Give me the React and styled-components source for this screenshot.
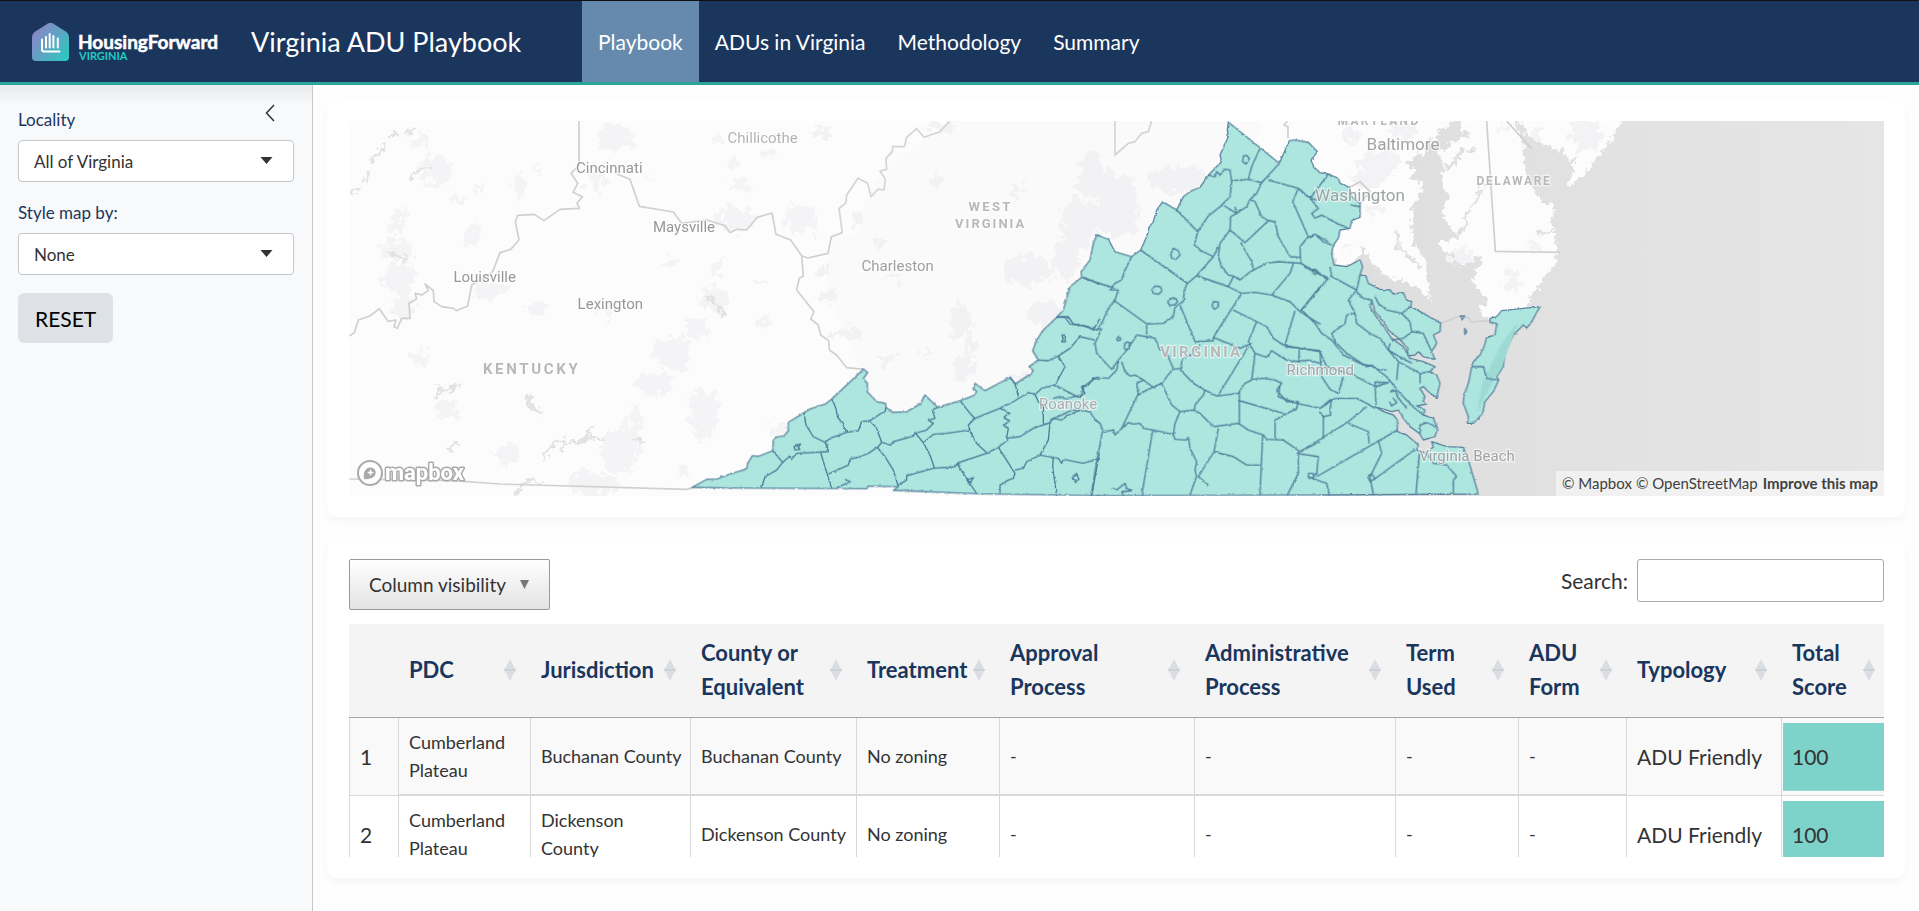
import React from 'react';
import styled, { createGlobalStyle } from 'styled-components';

const GlobalStyle = createGlobalStyle`
  * {
    box-sizing: border-box;
  }
  body {
    margin: 0;
    background: #fefefe;
    color: #333;
    font-family: Lato, "Liberation Sans", sans-serif;
    font-size: 21px;
    line-height: 34px;
  }
  button, input, select {
    font-family: inherit;
    color: inherit;
  }
`;

const Page = styled.div`
  display: flex;
  flex-direction: column;
  min-height: 100vh;
`;
const Header = styled.header`
  position: relative;
  display: flex;
  align-items: stretch;
  height: 85px;
  padding-left: 32px;
  background: #1b365d;
  border-top: 1px solid #111;
  border-bottom: 3px solid #2ba59b;
`;
const Brand = styled.a`
  display: flex;
  align-items: center;
  gap: 31px;
  width: 550px;
  color: #fff;
  font-size: 27px;
  text-decoration: none;
`;
const Nav = styled.nav`
  display: flex;
`;
const NavLink = styled.a`
  display: flex;
  align-items: center;
  padding: 0 16px;
  color: #fff;
  background: ${props => (props.$active ? '#668aae' : 'transparent')};
  font-size: 21px;
  text-decoration: none;
`;
const Body = styled.div`
  display: flex;
  flex: 1;
`;
const Sidebar = styled.aside`
  display: flex;
  flex-direction: column;
  flex: 0 0 313px;
  padding: 21px 18px;
  background: linear-gradient(#e9eaec, #f8f9fb 20px);
  border-right: 1px solid #c6c8ca;
`;
const Collapse = styled.button`
  position: absolute;
  left: 258px;
  top: 100px;
  display: flex;
  justify-content: center;
  width: 24px;
  padding: 4px 0;
  border: 0;
  background: none;
`;
const Field = styled.div`
  position: relative;
  display: flex;
  flex-direction: column;
  gap: 6px;
  margin-bottom: 17px;
  font-size: 17px;
`;
const Label = styled.label`
  color: #1b365d;
  line-height: 28px;
`;
const Select = styled.select`
  appearance: none;
  height: 42px;
  padding: 0 15px;
  background: #fff;
  border: 1px solid #c4c7ca;
  border-radius: 4px;
  font-size: 17px;
`;
const Caret = styled.svg`
  position: absolute;
  right: 21px;
  bottom: 18px;
  pointer-events: none;
`;
const Reset = styled.button`
  align-self: flex-start;
  height: 50px;
  margin-top: 1px;
  padding: 0 17px;
  border: 0;
  border-radius: 6px;
  background: #dee2e6;
  color: #000;
  font-size: 21px;
`;
const Main = styled.main`
  display: flex;
  flex: 1;
  flex-direction: column;
  gap: 20px;
  min-width: 0;
  padding: 14px;
`;
const Card = styled.section`
  padding: 22px 21px 21px 22px;
  background: #fff;
  border-radius: 10px;
  box-shadow: 0 4px 8px rgba(0, 0, 0, 0.04);
`;
const MapFrame = styled.div`
  position: relative;
  height: 375px;
  overflow: hidden;
`;
const MapSvg = styled.svg`
  display: block;
  width: 100%;
  height: 100%;
  font-family: Roboto, sans-serif;
`;
const MapLogo = styled.svg`
  position: absolute;
  left: 7px;
  bottom: 8px;
`;
const Attribution = styled.div`
  position: absolute;
  right: 0;
  bottom: 0;
  padding: 0 6px;
  background: rgba(255, 255, 255, 0.5);
  font-size: 15px;
  line-height: 25px;
`;
const AttributionLink = styled.a`
  margin-right: ${props => (props.$gap || 0)}px;
  color: #404040;
  font-weight: ${props => (props.$bold ? 700 : 400)};
  text-decoration: none;
`;
const Toolbar = styled.div`
  display: flex;
  justify-content: space-between;
  align-items: flex-start;
  height: 65px;
`;
const Visibility = styled.button`
  display: flex;
  align-items: center;
  gap: 14px;
  height: 51px;
  padding: 0 20px 0 19px;
  border: 1px solid #999;
  border-radius: 2px;
  background: linear-gradient(#fff, #e3e3e3);
  font-size: 19px;
`;
const Search = styled.label`
  display: flex;
  align-items: center;
  gap: 9px;
`;
const SearchInput = styled.input`
  width: 247px;
  height: 43px;
  padding: 5px;
  border: 1px solid #aaa;
  border-radius: 3px;
  font-size: 20px;
`;
const TableClip = styled.div`
  height: 233px;
  overflow: hidden;
`;
const Table = styled.table`
  width: calc(100% + 5px);
  table-layout: fixed;
  border-collapse: separate;
  border-spacing: 0;
`;
const Th = styled.th`
  height: 94px;
  padding: 0 14px 2px 11px;
  background: #f4f4f4;
  border-bottom: 1px solid #a5a5a7;
  color: #1b365d;
  font-size: 22px;
  text-align: left;
`;
const HeadCell = styled.div`
  display: flex;
  align-items: center;
  justify-content: space-between;

  svg {
    flex: none;
  }
`;
const Td = styled.td`
  padding: 10px 6px 10px 10px;
  border-left: 1px solid #d9d9d9;
  border-top: ${props => (props.$first ? 0 : 1)}px solid #d9d9d9;
  border-bottom: ${props => (props.$large ? 0 : 1)}px solid #d9d9d9;
  background: ${props => (props.$first ? '#f9f9f9' : '#fff')};
  font-size: ${props => (props.$large ? 21 : 18)}px;
  line-height: 28px;
`;
const ScoreTd = styled(Td)`
  background-image: linear-gradient(#7dd2ca, #7dd2ca);
  background-size: 98% 88%;
  background-position: center;
  background-repeat: no-repeat;
`;

/* Map geometry. Three units make one screen pixel. */
const WEST_EDGE = '1260,1187 890,1181 640,1171 655,1160 565,1158 560,1166 150,1164 36,1162 80,1138 112,1137 150,1122 200,1107 203,1090 217,1067 235,1069 278,1052 280,1020 292,1010 312,1008 325,992 325,967 372,938 390,927 436,912 455,897 550,808 563,817 550,836 562,850 562,875 590,905 617,910 618,922 638,937 680,935 720,912 735,885 773,922 840,902 880,887 890,875 880,865 885,850 915,872 990,832 1005,852 1052,822 1060,812 1047,800 1075,780 1058,752 1070,720 1090,690 1130,652 1150,630 1170,560 1205,532 1203,515 1230,480 1240,430 1250,405 1260,408';
const NORTH_EDGE = '290,405 325,418 345,455 395,470 422,450 440,410 448,380 460,365 470,330 488,305 530,330 550,290 575,272 600,262 628,222 665,185 660,165 685,110 682,90 685,66 838,190 868,122 885,120 925,127 952,155 933,180 940,200 960,218';
const EAST_EDGE = '180,218 205,222 235,235 240,250 268,262 275,290 300,310 300,352 275,362 270,385 240,390 235,415 220,435 215,460 222,495 260,500 300,480 308,500 300,525 318,528 325,550 360,568 390,570 400,582 430,578 440,600 455,605 452,620 490,640 542,670 540,695 520,705 530,730 515,755 525,778 490,770 475,755 465,765 445,768 440,740 415,715 385,690 370,665 345,635 335,600 330,620 345,645 360,665 395,715 430,740 450,775 490,785 525,800 510,815 530,825 540,850 530,892 510,880 490,860 480,865 495,890 490,905 500,912 470,918 495,930 490,945 520,955 532,985 525,1010 490,1020 478,1000 450,980 430,955 415,930 395,935 345,920 370,935 400,945 412,960 412,995 440,1005 475,1035 470,1050 500,1060 520,1040 515,1025 560,1040 610,1042 625,1080 655,1182 180,1185';
const SHORE = '840,620 725,632 710,650 690,655 690,668 710,670 705,705 680,712 672,740 660,765 640,785 635,800 625,850 612,885 610,910 625,950 622,970 640,970 668,940 675,905 700,875 716,840 710,830 730,800 735,760 760,705 790,675 800,684 812,670';

const WEST_LINES = [
  '372,938 378,975 400,1010 435,1027 445,1050',
  '455,897 468,925 472,950 487,970 500,997',
  '435,1027 450,1015 500,997 535,992 545,965 570,962 600,942 615,935 618,922',
  '278,1052 308,1087 330,1068 335,1078 350,1060 445,1055 440,1030',
  '308,1087 290,1110 255,1130 245,1163',
  '422,1058 455,1166',
  '445,1122 505,1095 510,1078 540,1070 565,1060 595,1040 605,1027',
  '570,962 590,985 605,1027 632,1035 640,1025 700,1008 705,998 730,1028',
  '590,1040 615,1070 640,1110 655,1160',
  '730,1028 750,1065 763,1103',
  '655,1155 680,1140 680,1127 760,1105 825,1100 835,1088 920,1060 955,1042 985,1018',
  '730,1028 760,1003 800,1000 868,990 890,1030 920,1058',
  '705,1000 740,990 760,970 745,960 765,955 757,930 773,922',
  '840,902 870,940 885,955 865,975 870,990',
  '885,955 960,925 1000,905 1045,878 1065,883 1075,905 1090,920 1090,970',
  '990,832 1005,850 1015,890',
  '960,925 990,940 972,950 988,965 970,975 985,985 980,1015 1020,1010 1060,985 1110,968 1120,955 1145,960 1165,945 1200,930',
  '955,1042 1005,1120 1000,1135 985,1140 960,1155 960,1180',
  '1005,1110 1030,1105 1040,1085 1080,1065 1135,1075 1145,1090 1150,1078 1210,1090 1260,1075',
  '830,1090 890,1181',
  '1130,652 1165,650 1180,672 1225,680 1240,690 1260,655',
  '1075,780 1105,782 1135,768 1155,800 1125,855 1085,865 1065,883',
  '1135,768 1170,745 1200,710 1245,720',
  '1125,855 1195,892',
  '1205,532 1260,552',
  '1110,968 1105,1020 1080,1065',
  '1120,1070 1118,1100 1130,1187',
  '1258,1060 1235,1187',
  '1195,892 1215,880 1205,862 1225,855 1240,835 1260,838',
  '1118,895 1140,890 1160,898 1180,890 1210,885',
  '345,1035 362,1032 355,1042 360,1048 345,1050 342,1040 352,1038',
  '1145,705 1155,705 1157,725 1145,725 1150,715 1145,705',
  '1178,1130 1190,1120 1197,1138 1185,1145 1178,1130',
  '860,1140 882,1132 868,1150 860,1140',
  '470,1163 500,1150 512,1145 495,1138',
];
const CENTRAL_LINES = [
  '530,330 593,395',
  '422,450 562,550',
  '250,532 290,548 330,560 345,565',
  '395,470 375,510 365,540 345,550 330,570 355,570 345,600 325,625 305,670 290,690 240,675 210,672 195,652 170,650',
  '340,600 440,672 440,705',
  '440,672 490,670 520,650 525,620 550,605 553,570 562,550 590,527 640,470 600,450 583,435 593,395 625,348 660,320 690,290 695,245 690,210 675,207 660,225 650,215 645,230 625,225',
  '695,242 745,238 755,200 780,145',
  '745,238 785,248 838,190',
  '785,248 770,280 750,298 740,320 710,340 672,317',
  '805,240 895,265 930,295 950,300',
  '895,265 878,305 925,410',
  '750,298 765,305 785,350 805,362 825,365 835,410 870,470 900,472',
  '705,320 710,340 692,350 690,390 735,428 805,362',
  '690,390 660,430 655,470 665,500 685,525 700,528 720,540 745,520 760,510 755,485 722,428',
  '640,470 655,440',
  '590,527 685,560 725,580 765,577 815,585 870,605 900,635 940,660 960,672',
  '685,560 700,530',
  '760,510 800,490 835,485 875,488 905,490',
  '880,490 870,520 815,585',
  '925,410 945,403 985,425',
  '925,410 900,440 902,490 945,515 985,540',
  '725,580 640,712',
  '540,615 585,725 640,722 640,712 720,745 755,730',
  '700,630 770,665 800,680 820,715 850,735 900,745 960,752',
  '960,560 900,635',
  '770,665 745,725 765,760 800,772 815,752 835,765 860,780 895,785',
  '885,632 855,735',
  '898,745 896,785 925,780 960,790',
  '745,740 655,885',
  '765,760 755,840',
  '290,690 305,685 285,730 290,760 335,808 355,780',
  '355,780 385,745 410,705 440,710 465,715 480,750 500,760 520,805 485,850 460,862 430,840 405,825 390,828 375,815 365,785',
  '355,785 350,810 325,835 290,832 250,860 245,885',
  '540,808 580,850 615,870 650,888 715,880 735,850 760,838 790,835 825,840 845,850 830,870 860,905 895,905 890,925 825,960 825,1018',
  '520,808 545,805 545,780 580,760 600,735',
  '485,850 515,915 540,935 580,930 600,940 640,980 715,970 745,990 790,1005 800,1018 850,1020 900,1055 960,1025',
  '615,870 610,885 585,915 583,930',
  '718,875 718,970',
  '718,902 850,940',
  '485,850 440,870 415,885 410,850 430,840',
  '415,880 365,985 385,968 400,972 420,970 430,985 460,990 520,1003 525,970 540,935',
  '520,1003 525,1018 558,1020 565,1012 570,1045 590,1085 585,1110 590,1128 570,1185',
  '655,985 642,1055 595,1130 625,1155',
  '642,1055 700,1070 740,1095 780,1095',
  '788,1005 780,1185',
  '895,1055 895,1120 862,1185',
  '458,992 425,1187',
  '235,930 270,935 285,960 300,970 310,995 340,990 345,1005 365,985',
  '150,960 185,945 215,930 235,930',
  '307,995 290,1085 273,1187',
  '515,455 520,445 535,452 540,465 528,478 515,475 512,465 515,455',
  '455,570 465,558 480,560 487,572 475,583 460,580 455,570',
  '503,605 510,596 528,596 533,606 522,615 508,615 503,605',
  '636,620 640,605 655,606 655,620 645,628 636,620',
  '350,715 360,712 362,720 352,722 350,715',
  '372,740 378,726 390,728 385,747 375,748 372,740',
  '730,168 740,166 748,176 738,192 728,185 730,168',
  '935,515 945,508 955,516 945,524 935,515',
  '335,1165 350,1170 375,1150 380,1165 395,1172 365,1175 370,1187',
];
const EAST_LINES = [
  '205,222 150,295 175,325 155,340 165,355 185,345 230,370 265,385',
  '115,265 150,295',
  '150,415 165,403 190,425 215,435',
  '210,500 215,530 235,540 290,570 300,525',
  '200,540 125,630',
  '125,490 150,510 165,508 178,520 205,535',
  '290,570 265,600 285,640 290,670 330,700 360,715 385,750 415,785 410,840',
  '290,575 310,595 335,600',
  '285,640 260,645 255,670 215,700 225,725 260,760 320,800 335,795 350,808 380,810',
  '125,630 165,670 185,700 215,720 250,765 300,790 340,800 380,830 420,880 465,925 490,945',
  '75,740 125,745 180,755 200,800 280,825 345,860 385,848 345,846 348,915',
  '180,755 185,830 210,868 235,880 250,830',
  '60,855 55,890 110,910 180,925 210,900 230,895 290,895 320,910 345,925',
  '180,925 200,912 215,900 210,925 212,945 190,950 178,935',
  '190,950 190,1018',
  '320,920 265,965 120,1055',
  '265,970 325,995 327,1030',
  '412,990 170,1130',
  '355,1020 365,1060 330,1130 340,1185',
  '340,1140 465,1048',
  '322,1128 335,1122 345,1135 330,1145 322,1128',
  '478,1060 468,1182',
  '110,1060 175,1070 170,1120 155,1135 200,1150 208,1185',
  '145,1120 160,1120 160,1133 145,1133 145,1120',
  '500,1060 520,1090 560,1095 590,1130 580,1140 580,1182',
  '345,590 355,610 380,630 425,640 450,665 455,695',
  '425,640 452,620',
  '395,720 430,715 455,695 490,700 515,755',
  '455,790 410,765 385,750 390,730',
  '480,820 480,850',
  '390,875 408,872 412,890 440,925',
  '388,905 395,918 410,908 400,895',
  '415,785 480,820 510,815',
  '635,800 670,800 680,835 716,840',
  '480,1000 480,975 500,968 530,980',
  '270,315 300,320',
];
const BORDERS_WEST = [
  '777,63 777,195 753,220 773,250 759,277 787,290 771,310 779,325 720,328 672,362 643,343 593,346 586,365 597,420 572,448 540,458 518,515 455,555 443,618 409,632 400,625 365,620 342,605 340,572 315,552 325,572 305,585 285,580 290,597 267,610 270,655 245,655 232,685 222,680 228,660 204,664 178,626 150,648 115,660 103,698 88,708',
  '890,222 930,238 958,319 1060,336 1085,370 1160,360 1215,377 1230,398 1250,388 1280,390 1312,352 1356,339 1368,403 1412,420 1445,467 1463,474 1524,460 1534,410 1568,398',
  '1445,467 1450,528 1438,535 1430,570 1482,635 1472,657 1495,675 1502,705 1526,722 1528,750 1550,765 1580,803 1635,808',
  '88,1137 400,1142 540,1152 1100,1168 1120,1162',
];
const BORDERS_MID = [
  '452,410 487,398 477,326 498,308 500,285 534,235 563,250 573,290 595,267 612,270 616,238 600,213 620,208 618,175 637,155 638,140 673,140 680,112 710,86 732,112 778,96 808,65',
  '1305,63 1305,165 1345,130 1365,125 1385,100 1405,95 1415,63',
];
const BORDERS_EAST = [
  '680,63 706,454 900,457',
  '740,63 815,146',
  '82,63 72,75 84,80 84,115',
  '542,670 600,648 628,655 632,666 688,662',
  '270,262 300,245 330,275 300,310',
];
const WATER_LINES = [
  '600,75 575,95 550,100', '645,150 600,155 585,190 560,205', '665,250 650,300 615,350 625,370 595,400',
  '408,390 412,440 440,465 485,505', '305,440 320,480 345,500 360,525', '540,455 585,470', '830,402 870,395 890,380',
];
const LAKES = [
  '88,288 100,272 125,265', '135,245 145,215', '150,190 165,170 195,135', '210,108 235,105', '258,98 285,85',
  '272,238 290,212 330,205', '207,462 230,468 250,480 262,460', '345,895 365,872 350,858 M365,872 395,872 410,852',
  '617,900 630,885 630,920 665,940', '622,910 650,930', '670,1080 690,1040 725,1020 765,1030 800,1010 815,980 M720,1050 740,1020 M780,1030 820,1010 850,1018',
  '585,1188 610,1150 630,1140 665,1150', '385,1050 400,1035 418,1028', '1150,590 1180,600 1195,620 1215,650', '940,1020 975,1025',
];
const URBAN_WEST = [
  [350, 210, 50, 45], [300, 120, 28, 22], [885, 110, 55, 40], [830, 240, 25, 35], [597, 262, 17, 44], [655, 213, 12, 10],
  [410, 300, 16, 14], [482, 267, 8, 14], [235, 365, 24, 36], [462, 400, 20, 42], [230, 450, 50, 30], [240, 530, 50, 38],
  [250, 610, 30, 45], [505, 570, 50, 24], [655, 625, 30, 14], [300, 775, 30, 22], [380, 930, 36, 30], [870, 625, 28, 22],
  [1190, 505, 22, 26], [1185, 595, 44, 40], [1130, 685, 34, 32], [1060, 760, 60, 50], [1000, 850, 55, 35], [945, 960, 22, 50],
  [900, 1050, 55, 70], [820, 1150, 80, 32], [1150, 940, 45, 75], [1250, 355, 60, 35], [1445, 355, 50, 48], [1050, 490, 20, 12],
  [1320, 545, 16, 14], [1335, 668, 24, 20], [1195, 120, 16, 14], [1345, 158, 18, 12], [1260, 260, 40, 12], [560, 1065, 30, 30],
  [1240, 190, 25, 12], [985, 232, 14, 12], [1090, 1115, 20, 20], [1380, 990, 34, 22],
];
const URBAN_MID = [
  [1040, 510, 75, 45], [1200, 370, 55, 75], [1235, 210, 35, 60], [1100, 640, 60, 35], [1160, 480, 40, 60], [840, 660, 35, 50],
  [440, 590, 28, 22], [500, 700, 50, 16], [620, 775, 26, 18], [770, 245, 22, 16], [530, 360, 20, 22], [430, 515, 22, 16],
  [600, 430, 20, 14], [1010, 265, 20, 22], [640, 530, 24, 12], [870, 730, 12, 36], [1280, 260, 90, 40], [1310, 340, 70, 70],
  [850, 800, 28, 34], [1020, 830, 40, 12], [420, 100, 30, 16], [780, 80, 40, 18], [1500, 240, 90, 40], [740, 760, 20, 10],
];
const URBAN_EAST = [
  [360, 190, 60, 40], [320, 240, 45, 25], [430, 90, 45, 30], [270, 100, 30, 24], [340, 320, 30, 22], [600, 470, 36, 26],
  [820, 440, 18, 16], [760, 540, 30, 24], [820, 100, 20, 14], [980, 100, 50, 50], [260, 440, 14, 12], [740, 80, 20, 8],
];

const LABELS = [
  ['Cincinnati', 781, 156, 45, '#979797'],
  ['Maysville', 1005, 333, 45, '#979797'],
  ['Louisville', 407, 482, 45, '#979797'],
  ['Lexington', 784, 564, 45, '#979797'],
  ['Chillicothe', 1241, 67, 45, '#b4b4b4'],
  ['Charleston', 1646, 449, 45, '#a0a0a0'],
  ['Roanoke', 2157, 863, 45, '#b0aab0'],
  ['Richmond', 2914, 761, 45, '#a8a2a8'],
  ['Washington', 3033, 240, 51, '#9da2a2'],
  ['Baltimore', 3162, 86, 51, '#a2a2a2'],
  ['Virginia Beach', 3354, 1021, 45, '#a2a2a2'],
];
const STATES = [
  ['KENTUCKY', 548, 758, 45, 8],
  ['WEST', 1925, 271, 39, 7],
  ['VIRGINIA', 1925, 320, 39, 6],
  ['VIRGINIA', 2557, 709, 45, 7],
  ['MARYLAND', 3090, 11, 36, 7],
  ['DELAWARE', 3495, 192, 36, 5],
];

const Lines = ({ items, ...rest }) => (
  <g fill="none" strokeLinejoin="round" {...rest}>
    {items.map(d => <path key={d} d={`M${d}`} />)}
  </g>
);

const Urban = ({ items, color }) => (
  <g fill={color} filter="url(#ragged)">
    {items.map(([cx, cy, rx, ry]) => <ellipse key={`${cx}-${cy}`} cx={cx} cy={cy} rx={rx} ry={ry} />)}
  </g>
);

const VirginiaMap = () => (
  <MapSvg viewBox="0 0 4605 1125" preserveAspectRatio="xMidYMid slice" role="img" aria-label="Map of Virginia localities">
    <defs>
      <linearGradient id="sea" x1="0" x2="1">
        <stop offset="0" stopColor="#dedede" />
        <stop offset="1" stopColor="#e6e6e6" />
      </linearGradient>
      <filter id="ragged" x="-10%" y="-10%" width="120%" height="120%">
        <feTurbulence type="fractalNoise" baseFrequency="0.04" numOctaves="3" seed="4" />
        <feDisplacementMap in="SourceGraphic" scale="70" xChannelSelector="R" yChannelSelector="G" />
      </filter>
      <filter id="coast" x="-5%" y="-5%" width="110%" height="110%">
        <feTurbulence type="fractalNoise" baseFrequency="0.06" numOctaves="3" seed="9" result="n" />
        <feDisplacementMap in="SourceGraphic" in2="n" scale="36" xChannelSelector="R" yChannelSelector="G" />
      </filter>
      <filter id="survey" x="-2%" y="-2%" width="104%" height="104%">
        <feTurbulence type="fractalNoise" baseFrequency="0.08" numOctaves="2" seed="2" result="n" />
        <feDisplacementMap in="SourceGraphic" in2="n" scale="7" xChannelSelector="R" yChannelSelector="G" />
      </filter>
    </defs>
    <rect width="4605" height="1125" fill="#fcfcfc" />
    <path d="M1445,345 1520,350 1560,200 1680,90 1800,0 3000,0 2300,900 1600,900 1430,500z" fill="#fafafa" />
    <g transform="translate(-87 -63)">
      <Urban items={URBAN_WEST} color="#f4f4f6" />
      <Lines items={LAKES} stroke="#e2e2e3" strokeWidth="9" filter="url(#coast)" />
      <Lines items={BORDERS_WEST} stroke="#d0d0d0" strokeWidth="5" />
    </g>
    <g transform="translate(993 -63)">
      <Urban items={URBAN_MID} color="#f2f2f4" />
      <Lines items={BORDERS_MID} stroke="#d4d4d4" strokeWidth="5" />
    </g>
    <g transform="translate(2733 -63)">
      <path d="M200,40H1960V1200H200z" fill="url(#sea)" />
      <g fill="#fcfcfd" filter="url(#coast)">
        <path d="M0,20 590,20 585,63 560,85 530,90 535,110 500,125 490,155 450,185 435,195 470,210 445,235 490,245 475,300 455,320 452,400 470,450 500,485 500,540 515,605 500,590 470,560 420,540 370,525 335,480 308,450 300,470 270,490 240,500 222,480 218,440 240,400 150,400 0,300z" />
        <path d="M600,20 745,20 790,130 795,220 830,290 885,325 875,360 890,440 885,500 850,530 830,570 805,600 800,640 730,650 700,660 665,645 660,620 690,605 650,570 640,540 670,470 600,490 550,460 535,430 600,410 560,370 545,330 570,290 545,260 550,200 535,160 590,120 640,100 610,90 600,60z" />
        <path d="M750,20 790,85 840,130 915,155 925,185 945,170 925,262 960,235 1000,190 1060,110 1085,63 1090,20z" />
      </g>
      <Urban items={URBAN_EAST} color="#f3f3f5" />
      <Lines items={WATER_LINES} stroke="#e0e0e0" strokeWidth="9" filter="url(#coast)" />
      <Lines items={BORDERS_EAST} stroke="#cfcfcf" strokeWidth="5" />
    </g>
    <g filter="url(#survey)">
      <g fill="#ade5df">
        <path transform="translate(993 -63)" d={`M${WEST_EDGE}z`} />
        <path transform="translate(1953 -63)" d={`M290,1187 ${NORTH_EDGE} 965,218 965,1186z`} />
        <path transform="translate(2733 -63)" d={`M${EAST_EDGE}z M${SHORE}z`} />
      </g>
      <g fill="none" stroke="#5c86a0" strokeWidth="4" strokeLinejoin="round">
        <path transform="translate(993 -63)" d={`M${WEST_EDGE}`} />
        <path transform="translate(1953 -63)" d={`M${NORTH_EDGE}M290,1187 960,1185`} />
        <path transform="translate(2733 -63)" d={`M${EAST_EDGE} M${SHORE}z M601,648 614,648 606,660z M614,685 620,697 614,703z`} />
      </g>
      <g transform="translate(2733 -63)" fill="#9edad4">
        <path d="M665,855 690,800 725,730 775,665 740,760 725,805 708,830 668,900 650,940z" />
      </g>
      <g stroke="#4f7b98" strokeWidth="4">
        <Lines items={WEST_LINES} transform="translate(993 -63)" />
        <Lines items={CENTRAL_LINES} transform="translate(1953 -63)" />
        <Lines items={EAST_LINES} transform="translate(2733 -63)" />
      </g>
    </g>
    <g textAnchor="middle" stroke="#fff" strokeOpacity="0.6" strokeWidth="7" paintOrder="stroke">
      {LABELS.map(([text, x, y, size, fill]) => (
        <text key={text} x={x} y={y} fontSize={size} fill={fill}>{text}</text>
      ))}
      {STATES.map(([text, x, y, size, spacing]) => (
        <text key={`${text}-${y}`} x={x} y={y} fontSize={size} fontWeight="700" letterSpacing={spacing} fill="#b8b8b8">{text}</text>
      ))}
    </g>
  </MapSvg>
);

const Logo = () => (
  <svg width="188" height="44" viewBox="0 0 188 44" role="img" aria-label="HousingForward Virginia">
    <defs>
      <linearGradient id="house" x1="0" y1="0.1" x2="1" y2="0.9">
        <stop offset="0" stopColor="#9580c6" />
        <stop offset="0.5" stopColor="#5fa3c4" />
        <stop offset="1" stopColor="#2cc9bf" />
      </linearGradient>
    </defs>
    <path d="M16 3.600q2.500-1.500 5 0L34.500 12Q37 14 37 17V37q0 4-4 4H4q-4 0-4-4V17q0-3 2.500-5z" fill="url(#house)" />
    <path d="M10 19.500V29.500q0 2 2 2H27.500M14 17V27.500M17.700 14V27.500M21.400 16V27.500M25.800 18.500V27.500" fill="none" stroke="#fff" strokeWidth="2" strokeLinecap="round" />
    <text x="46" y="29" fontSize="19" fontWeight="700" fill="#fff" stroke="#fff" strokeWidth="0.500">HousingForward</text>
    <text x="47" y="40" fontSize="11" fontWeight="700" fill="#22cdc2">VIRGINIA</text>
  </svg>
);

const SortIcon = () => (
  <svg width="12" height="22" viewBox="0 0 12 22" aria-hidden="true">
    <path d="M6 0L12 11.500H0z" fill="#d3d8de" fillOpacity="0.8" />
    <path d="M6 22L0 10.500H12z" fill="#d3d8de" fillOpacity="0.8" />
    <path d="M0 11H12" stroke="#c3c9d1" />
  </svg>
);

const COLUMNS = [
  { title: '', width: 49, large: true },
  { title: 'PDC', width: 132 },
  { title: 'Jurisdiction', width: 160 },
  { title: 'County or Equivalent', width: 166 },
  { title: 'Treatment', width: 143 },
  { title: 'Approval Process', width: 195 },
  { title: 'Administrative Process', width: 201 },
  { title: 'Term Used', width: 123 },
  { title: 'ADU Form', width: 108 },
  { title: 'Typology', width: 155, large: true },
  { title: 'Total Score', width: 108, large: true },
];
const ROWS = [
  ['1', 'Cumberland Plateau', 'Buchanan County', 'Buchanan County', 'No zoning', '-', '-', '-', '-', 'ADU Friendly', '100'],
  ['2', 'Cumberland Plateau', 'Dickenson County', 'Dickenson County', 'No zoning', '-', '-', '-', '-', 'ADU Friendly', '100'],
];
const NAV = ['Playbook', 'ADUs in Virginia', 'Methodology', 'Summary'];

const SelectField = ({ id, label, options }) => (
  <Field>
    <Label htmlFor={id}>{label}</Label>
    <Select id={id}>
      {options.map(option => <option key={option}>{option}</option>)}
    </Select>
    <Caret width="13" height="7" viewBox="0 0 13 7" aria-hidden="true">
      <path d="M0.500 0H12.500L6.500 7z" fill="#333" />
    </Caret>
  </Field>
);

const ScoreTable = () => (
  <TableClip>
    <Table>
      <colgroup>
        {COLUMNS.map(column => <col key={column.title} width={column.width} />)}
      </colgroup>
      <thead>
        <tr>
          {COLUMNS.map(column => (
            <Th key={column.title} scope="col">
              {column.title && (
                <HeadCell>
                  <span>{column.title}</span>
                  <SortIcon />
                </HeadCell>
              )}
            </Th>
          ))}
        </tr>
      </thead>
      <tbody>
        {ROWS.map((row, r) => (
          <tr key={row[0]}>
            {row.map((value, c) => {
              const Cell = c === row.length - 1 ? ScoreTd : Td;
              return (
                <Cell key={COLUMNS[c].title} $first={r === 0} $large={COLUMNS[c].large}>{value}</Cell>
              );
            })}
          </tr>
        ))}
      </tbody>
    </Table>
  </TableClip>
);

const App = () => (
  <Page>
    <GlobalStyle />
    <Header>
      <Brand href="#">
        <Logo />
        <span>Virginia ADU Playbook</span>
      </Brand>
      <Nav>
        {NAV.map((item, i) => <NavLink key={item} href="#" $active={i === 0}>{item}</NavLink>)}
      </Nav>
    </Header>
    <Body>
      <Sidebar>
        <Collapse aria-label="Toggle sidebar">
          <svg width="10" height="18" viewBox="0 0 10 18" aria-hidden="true">
            <path d="M9 1L1.500 9L9 17" fill="none" stroke="#333" strokeWidth="1.500" />
          </svg>
        </Collapse>
        <SelectField id="locality" label="Locality" options={['All of Virginia']} />
        <SelectField id="style" label="Style map by:" options={['None']} />
        <Reset>RESET</Reset>
      </Sidebar>
      <Main>
        <Card>
          <MapFrame>
            <VirginiaMap />
            <MapLogo width="112" height="30" viewBox="0 0 112 30" role="img" aria-label="Mapbox logo">
              <circle cx="14" cy="15" r="12" fill="#fff" stroke="#aaa" strokeWidth="2" />
              <path d="M8 21C7 15 9 9 15 9.500C20 10 21 15 18 18.500C15.500 21 11 21.500 8 21z" fill="#aaa" />
              <path d="M14.500 11L15.500 13.500L18 14.500L15.500 15.500L14.500 18L13.500 15.500L11 14.500L13.500 13.500z" fill="#fff" />
              <text x="29" y="22" fontFamily="Roboto, sans-serif" fontSize="22" fontWeight="700" fill="#fff" stroke="#aaa" strokeWidth="3" strokeLinejoin="round" paintOrder="stroke">mapbox</text>
            </MapLogo>
            <Attribution>
              <AttributionLink href="#" $gap={4}>© Mapbox</AttributionLink>
              <AttributionLink href="#" $gap={5}>© OpenStreetMap</AttributionLink>
              <AttributionLink href="#" $bold>Improve this map</AttributionLink>
            </Attribution>
          </MapFrame>
        </Card>
        <Card>
          <Toolbar>
            <Visibility>
              Column visibility
              <svg width="9" height="9" viewBox="0 0 9 9" aria-hidden="true">
                <path d="M0 0H9L4.500 9z" fill="#777" />
              </svg>
            </Visibility>
            <Search>
              Search:
              <SearchInput type="search" />
            </Search>
          </Toolbar>
          <ScoreTable />
        </Card>
      </Main>
    </Body>
  </Page>
);

export default App;
